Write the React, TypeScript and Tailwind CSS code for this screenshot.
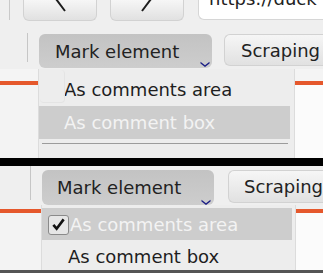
import React from "react";

const font = { fontFamily: '"DejaVu Sans", "Liberation Sans", sans-serif' };

function Chevron({ className }: { className: string }) {
  return (
    <svg viewBox="0 0 10 6" className={className}>
      <path d="M0.5 0.8 L5 4.2 L9.5 0.8 L9.5 2.6 L5 6 L0.5 2.6 Z" fill="#1c1f86" />
    </svg>
  );
}

function Check() {
  return (
    <svg viewBox="0 0 16 16" className="h-[15px] w-[15px]">
      <path d="M2.5 8.5 L6 12.5 L13.5 2.5" fill="none" stroke="#111" strokeWidth="2.8" />
    </svg>
  );
}

const lightBtn =
  "bg-gradient-to-b from-[#f6f6f6] to-[#e1e1e1] border border-[#d2d2d2]";

function TopPanel() {
  return (
    <div className="relative h-[158px] overflow-hidden bg-[#f4f4f4]">
      <div className="flex h-[22px] bg-[#efefef]">
        <div className="ml-[9px] h-[20px] w-px bg-[#c9c9c9]" />
        <div className={`relative ml-[13px] h-[21px] w-[74px] overflow-hidden rounded-b-md border-t-0 ${lightBtn}`}>
          <svg className="absolute left-0 top-0 h-[21px] w-[74px]" viewBox="0 0 74 21">
            <polyline points="41,-9 32,-1 41,11" fill="none" stroke="#1d1d1d" strokeWidth="2" />
          </svg>
        </div>
        <div className={`relative ml-[13px] h-[21px] w-[74px] overflow-hidden rounded-b-md border-t-0 ${lightBtn}`}>
          <svg className="absolute left-0 top-0 h-[21px] w-[74px]" viewBox="0 0 74 21">
            <polyline points="31,-9 40,-1 31,11" fill="none" stroke="#1d1d1d" strokeWidth="2" />
          </svg>
        </div>
        <div className="ml-[14px] h-[20px] flex-1 overflow-hidden rounded-bl-md border-b border-l border-[#d6d6d6] bg-white">
          <div className="-mt-[10px] whitespace-nowrap pl-[10px] text-[18px] leading-[18px] text-[#222]">https://duck</div>
        </div>
      </div>
      <div className="flex h-[47px] items-start bg-[#efefef] pt-[11px]">
        <div className="ml-[27px] h-[29px] w-px bg-[#c6c6c6]" />
        <div className="relative ml-[11px] mt-px flex h-[34px] w-[173px] items-center rounded-md bg-gradient-to-b from-[#c3c3c3] to-[#cdcdcd] pl-[16px] text-[18px] text-[#222]">
          Mark element
          <Chevron className="absolute bottom-[1px] right-[2px] h-[6px] w-[10px]" />
        </div>
        <div className={`ml-[12px] mt-px flex h-[32px] flex-1 items-center rounded-l-md border-r-0 pl-[16px] text-[18px] text-[#222] ${lightBtn}`}>
          Scraping
        </div>
      </div>
      <div className="mt-[12px] h-[4px] bg-[#e5582c]" />
      <div className="flex h-full">
        <div className="w-[38px] bg-[#f3f3f3]" />
        <div className="flex-1 bg-[#fbfbfb]" />
      </div>
      <div className="absolute left-[38px] top-[69px] bottom-0 w-[257px] border-x border-[#dcdcdc] bg-[#ededed] pt-[4px]">
        <div className="relative flex h-[33px] items-center pl-[25px] text-[18px] text-[#1e1e1e]">
          <div className="absolute left-[1px] top-[-3px] h-[33px] w-[25px] rounded-sm border-b border-r border-[#e4e4e4]" />
          As comments area
        </div>
        <div className="mr-[4px] flex h-[33px] items-center bg-[#cdcdcd] pl-[25px] text-[18px] text-[#f3f3f3]">
          As comment box
        </div>
        <div className="ml-[3px] mr-[6px] mt-[4px] h-px bg-[#9c9c9c]" />
      </div>
    </div>
  );
}

function BottomPanel() {
  return (
    <div className="relative h-[107px] overflow-hidden bg-[#f4f4f4]">
      <div className="flex h-[43px] items-start bg-[#efefef] pt-[4px]">
        <div className="ml-[30px] -mt-[4px] h-[34px] w-px bg-[#c6c6c6]" />
        <div className="relative ml-[11px] flex h-[35px] w-[172px] items-center rounded-md bg-gradient-to-b from-[#c3c3c3] to-[#cdcdcd] pl-[15px] text-[18px] text-[#222]">
          Mark element
          <Chevron className="absolute bottom-[0px] right-[3px] h-[6px] w-[10px]" />
        </div>
        <div className={`ml-[14px] flex h-[33px] flex-1 items-center rounded-l-md border-r-0 pl-[15px] text-[18px] text-[#222] ${lightBtn}`}>
          Scraping
        </div>
      </div>
      <div className="h-[4px] bg-[#e5582c]" />
      <div className="flex h-full">
        <div className="w-[41px] bg-[#f3f3f3]" />
        <div className="flex-1 bg-[#fbfbfb]" />
      </div>
      <div className="absolute left-[41px] top-[39px] bottom-0 w-[255px] border-x border-[#dcdcdc] bg-[#ededed] pt-[3px]">
        <div className="mr-[3px] flex h-[32px] items-center bg-[#cdcdcd] text-[18px] text-[#f3f3f3]">
          <div className="ml-[6px] mt-[1px] flex h-[20px] w-[21px] items-center justify-center rounded-[3px] border border-[#8a8a8a] bg-[#e6e6e6]">
            <Check />
          </div>
          <span className="ml-px">As comments area</span>
        </div>
        <div className="flex h-[32px] items-center pl-[26px] text-[18px] text-[#1e1e1e]">As comment box</div>
      </div>
      <div className="absolute inset-x-0 bottom-0 h-[3px] bg-[#555]" />
    </div>
  );
}

export default function App() {
  return (
    <div className="h-[273px] w-[323px] overflow-hidden" style={font}>
      <TopPanel />
      <div className="h-[8px] bg-black" />
      <BottomPanel />
    </div>
  );
}
